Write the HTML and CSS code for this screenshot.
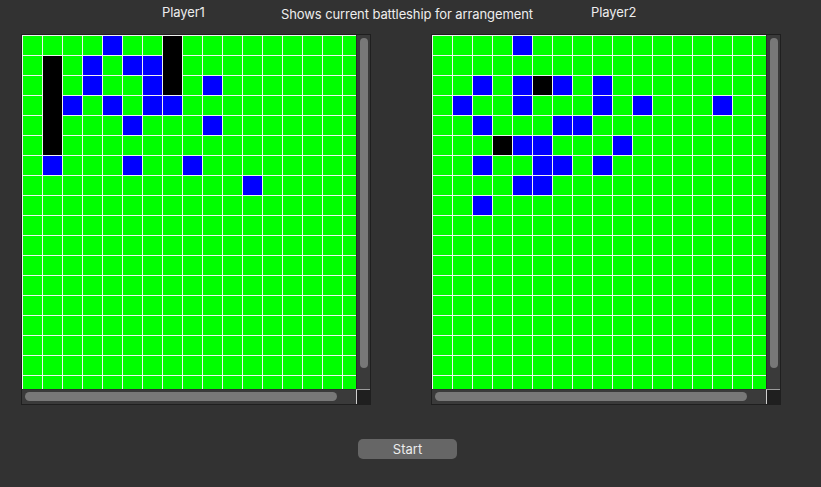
FILE: index.html
```html
<!DOCTYPE html>
<html>
<head>
<meta charset="utf-8">
<title>Battleship</title>
<link rel="stylesheet" href="styles.css">
</head>
<body>
<div class="window">
  <div class="header">
    <span class="label">Player1</span>
    <span class="label caption">Shows current battleship for arrangement</span>
    <span class="label">Player2</span>
  </div>
  <div class="boards">
    <div class="pane">
      <div class="viewport">
        <div class="board"
             data-ships="4,0 3,1 5,1 6,1 3,2 6,2 9,2 2,3 4,3 6,3 7,3 5,4 9,4 1,6 5,6 8,6 11,7"
             data-hits="7,0 1,1 7,1 1,2 7,2 1,3 1,4 1,5"></div>
      </div>
      <div class="vbar"><div class="vthumb"></div></div>
      <div class="hbar"><div class="hthumb"></div></div>
      <div class="corner"></div>
    </div>
    <div class="pane">
      <div class="viewport">
        <div class="board"
             data-ships="4,0 2,2 4,2 6,2 8,2 1,3 4,3 8,3 10,3 14,3 2,4 6,4 7,4 4,5 5,5 9,5 2,6 5,6 6,6 8,6 4,7 5,7 2,8"
             data-hits="5,2 3,5"></div>
      </div>
      <div class="vbar"><div class="vthumb"></div></div>
      <div class="hbar"><div class="hthumb"></div></div>
      <div class="corner"></div>
    </div>
  </div>
  <div class="footer">
    <button class="start">Start</button>
  </div>
</div>
<script src="script.js"></script>
</body>
</html>
```

FILE: styles.css
```css
* { box-sizing: border-box; }
html, body {
  margin: 0;
  padding: 0;
  background: #323232;
  width: 821px;
  height: 487px;
  overflow: hidden;
}
body {
  font-family: Inter, "Liberation Sans", sans-serif;
  font-size: 13px;
  color: #ededed;
}
.window {
  padding: 4px 0 0 21px;
}
.header {
  display: grid;
  grid-template-columns: 119px 310px auto;
  padding-left: 141px;
  height: 30px;
  line-height: 16px;
}
.label {
  white-space: nowrap;
  letter-spacing: -0.1px;
}
.caption {
  margin-top: 2px;
}
.boards {
  display: flex;
  gap: 60px;
}
.pane {
  display: grid;
  grid-template-columns: 334px 14px;
  grid-template-rows: 354px 15px;
  width: 350px;
  height: 371px;
  border: 1px solid #1f1f1f;
  background: #3a3a3a;
}
.viewport {
  overflow: hidden;
  background: #00ff00;
}
.board {
  display: grid;
  grid-template-columns: repeat(18, 19px);
  grid-auto-rows: 19px;
  gap: 1px;
  padding: 1px 0 0 1px;
  background: #f0f0f0;
  width: max-content;
}
.cell { background: #00ff00; }
.cell.ship { background: #0000ff; }
.cell.hit { background: #000000; }
.cell.hit.join { box-shadow: 0 1px 0 #000000; }
.vbar {
  background: #3a3a3a;
  border-left: 1px solid #2b2b2b;
  padding: 3px 0 0 3px;
}
.vthumb {
  width: 8px;
  height: 330px;
  border-radius: 4px;
  background: #787878;
}
.hbar {
  background: #3a3a3a;
  border-top: 1px solid #2f2f2f;
  padding: 2px 0 0 3px;
}
.hthumb {
  width: 312px;
  height: 9px;
  border-radius: 5px;
  background: #787878;
}
.corner {
  background: #1f1f1f;
  border-left: 1px solid #cfcfcf;
  border-top: 1px solid #9c9c9c;
}
.footer {
  padding-left: 337px;
  margin-top: 34px;
}
.start {
  width: 99px;
  height: 20px;
  border: none;
  border-radius: 5px;
  background: #666666;
  color: #ececec;
  font-family: Inter, "Liberation Sans", sans-serif;
  font-size: 13px;
  line-height: 20px;
  padding: 0;
}
```

FILE: script.js
```js
document.querySelectorAll('.board').forEach(function (board) {
  var cols = 18, rows = 19;
  var parse = function (s) {
    var set = {};
    (s || '').trim().split(/\s+/).forEach(function (p) { if (p) set[p] = true; });
    return set;
  };
  var ships = parse(board.dataset.ships);
  var hits = parse(board.dataset.hits);
  for (var r = 0; r < rows; r++) {
    for (var c = 0; c < cols; c++) {
      var d = document.createElement('div');
      d.className = 'cell';
      var key = c + ',' + r;
      if (hits[key]) {
        d.className += ' hit';
        if (hits[c + ',' + (r + 1)]) d.className += ' join';
      } else if (ships[key]) {
        d.className += ' ship';
      }
      board.appendChild(d);
    }
  }
});
```
